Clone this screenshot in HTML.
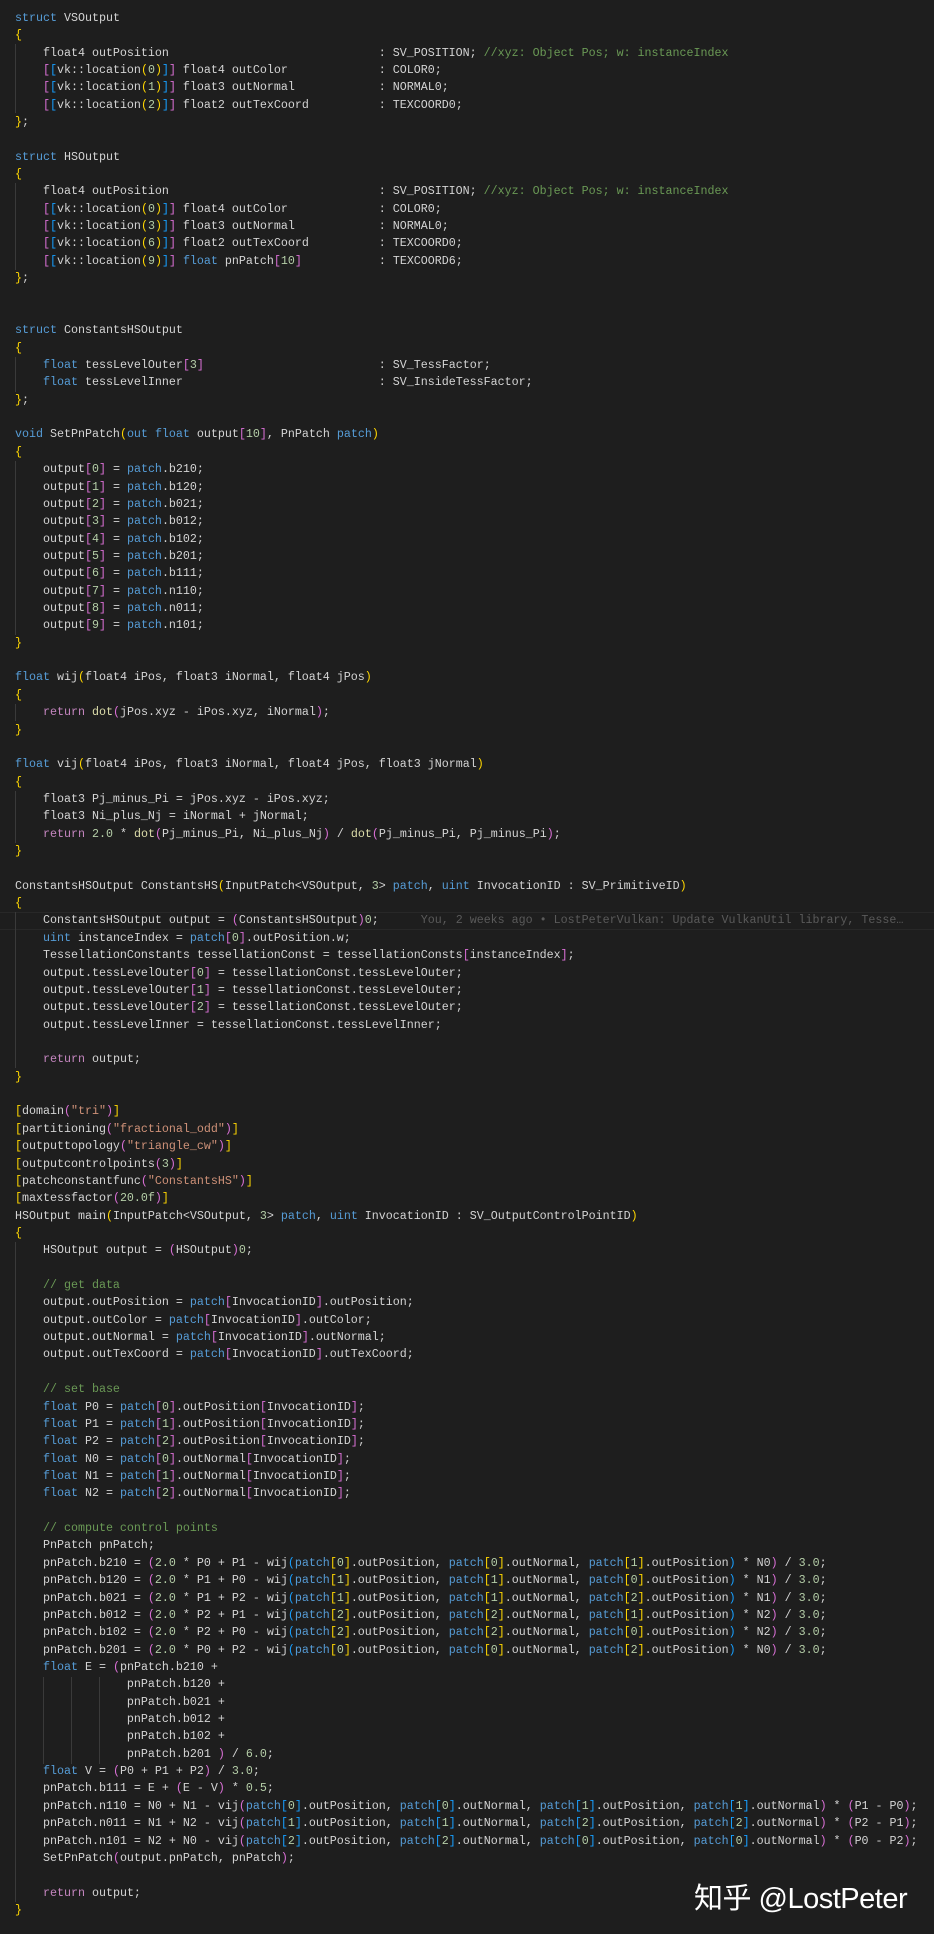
<!DOCTYPE html>
<html><head><meta charset="utf-8">
<style>
html,body{margin:0;padding:0;background:#1e1e1e;}
body{width:934px;height:1934px;position:relative;overflow:hidden;}
pre{margin:0;position:absolute;left:15px;top:9.8px;font-family:"Liberation Mono",monospace;font-size:11.67px;line-height:17.36px;color:#d4d4d4;white-space:pre;}
.k{color:#569cd6}.c{color:#6a9955}.s{color:#ce9178}.n{color:#b5cea8}.r{color:#c586c0}.f{color:#dcdcaa}
.y{color:#ffd700}.p{color:#da70d6}.b{color:#179fff}
.bl{color:#5a5a5a}
.g{position:absolute;width:1px;background:#3a3a3a;}
.wm{position:absolute;left:694px;top:1875px;font-family:"Liberation Sans","Noto Sans CJK SC",sans-serif;font-size:29px;color:#fff;letter-spacing:-0.5px;}
.cur{position:absolute;left:0;width:934px;height:18px;border-top:1px solid #282828;border-bottom:1px solid #282828;box-sizing:border-box;}
</style></head><body>
<div class="cur" style="top:912px"></div>
<div class="g" style="left:15px;top:44px;height:69px"></div>
<div class="g" style="left:15px;top:183px;height:87px"></div>
<div class="g" style="left:15px;top:357px;height:35px"></div>
<div class="g" style="left:15px;top:461px;height:174px"></div>
<div class="g" style="left:15px;top:704px;height:17px"></div>
<div class="g" style="left:15px;top:791px;height:52px"></div>
<div class="g" style="left:15px;top:912px;height:156px"></div>
<div class="g" style="left:15px;top:1242px;height:660px"></div>
<div class="g" style="left:43px;top:1677px;height:87px"></div>
<div class="g" style="left:71px;top:1677px;height:87px"></div>
<div class="g" style="left:99px;top:1677px;height:87px"></div>
<pre><span class="k">struct</span> VSOutput
<span class="y">{</span>
    float4 outPosition                              : SV_POSITION; <span class="c">//xyz: Object Pos; w: instanceIndex</span>
    <span class="p">[</span><span class="b">[</span>vk::location<span class="y">(</span><span class="n">0</span><span class="y">)</span><span class="b">]</span><span class="p">]</span> float4 outColor             : COLOR0;
    <span class="p">[</span><span class="b">[</span>vk::location<span class="y">(</span><span class="n">1</span><span class="y">)</span><span class="b">]</span><span class="p">]</span> float3 outNormal            : NORMAL0;
    <span class="p">[</span><span class="b">[</span>vk::location<span class="y">(</span><span class="n">2</span><span class="y">)</span><span class="b">]</span><span class="p">]</span> float2 outTexCoord          : TEXCOORD0;
<span class="y">}</span>;

<span class="k">struct</span> HSOutput
<span class="y">{</span>
    float4 outPosition                              : SV_POSITION; <span class="c">//xyz: Object Pos; w: instanceIndex</span>
    <span class="p">[</span><span class="b">[</span>vk::location<span class="y">(</span><span class="n">0</span><span class="y">)</span><span class="b">]</span><span class="p">]</span> float4 outColor             : COLOR0;
    <span class="p">[</span><span class="b">[</span>vk::location<span class="y">(</span><span class="n">3</span><span class="y">)</span><span class="b">]</span><span class="p">]</span> float3 outNormal            : NORMAL0;
    <span class="p">[</span><span class="b">[</span>vk::location<span class="y">(</span><span class="n">6</span><span class="y">)</span><span class="b">]</span><span class="p">]</span> float2 outTexCoord          : TEXCOORD0;
    <span class="p">[</span><span class="b">[</span>vk::location<span class="y">(</span><span class="n">9</span><span class="y">)</span><span class="b">]</span><span class="p">]</span> <span class="k">float</span> pnPatch<span class="p">[</span><span class="n">10</span><span class="p">]</span>           : TEXCOORD6;
<span class="y">}</span>;


<span class="k">struct</span> ConstantsHSOutput
<span class="y">{</span>
    <span class="k">float</span> tessLevelOuter<span class="p">[</span><span class="n">3</span><span class="p">]</span>                         : SV_TessFactor;
    <span class="k">float</span> tessLevelInner                            : SV_InsideTessFactor;
<span class="y">}</span>;

<span class="k">void</span> SetPnPatch<span class="y">(</span><span class="k">out</span> <span class="k">float</span> output<span class="p">[</span><span class="n">10</span><span class="p">]</span>, PnPatch <span class="k">patch</span><span class="y">)</span>
<span class="y">{</span>
    output<span class="p">[</span><span class="n">0</span><span class="p">]</span> = <span class="k">patch</span>.b210;
    output<span class="p">[</span><span class="n">1</span><span class="p">]</span> = <span class="k">patch</span>.b120;
    output<span class="p">[</span><span class="n">2</span><span class="p">]</span> = <span class="k">patch</span>.b021;
    output<span class="p">[</span><span class="n">3</span><span class="p">]</span> = <span class="k">patch</span>.b012;
    output<span class="p">[</span><span class="n">4</span><span class="p">]</span> = <span class="k">patch</span>.b102;
    output<span class="p">[</span><span class="n">5</span><span class="p">]</span> = <span class="k">patch</span>.b201;
    output<span class="p">[</span><span class="n">6</span><span class="p">]</span> = <span class="k">patch</span>.b111;
    output<span class="p">[</span><span class="n">7</span><span class="p">]</span> = <span class="k">patch</span>.n110;
    output<span class="p">[</span><span class="n">8</span><span class="p">]</span> = <span class="k">patch</span>.n011;
    output<span class="p">[</span><span class="n">9</span><span class="p">]</span> = <span class="k">patch</span>.n101;
<span class="y">}</span>

<span class="k">float</span> wij<span class="y">(</span>float4 iPos, float3 iNormal, float4 jPos<span class="y">)</span>
<span class="y">{</span>
    <span class="r">return</span> <span class="f">dot</span><span class="p">(</span>jPos.xyz - iPos.xyz, iNormal<span class="p">)</span>;
<span class="y">}</span>

<span class="k">float</span> vij<span class="y">(</span>float4 iPos, float3 iNormal, float4 jPos, float3 jNormal<span class="y">)</span>
<span class="y">{</span>
    float3 Pj_minus_Pi = jPos.xyz - iPos.xyz;
    float3 Ni_plus_Nj = iNormal + jNormal;
    <span class="r">return</span> <span class="n">2.0</span> * <span class="f">dot</span><span class="p">(</span>Pj_minus_Pi, Ni_plus_Nj<span class="p">)</span> / <span class="f">dot</span><span class="p">(</span>Pj_minus_Pi, Pj_minus_Pi<span class="p">)</span>;
<span class="y">}</span>

ConstantsHSOutput ConstantsHS<span class="y">(</span>InputPatch&lt;VSOutput, <span class="n">3</span>&gt; <span class="k">patch</span>, <span class="k">uint</span> InvocationID : SV_PrimitiveID<span class="y">)</span>
<span class="y">{</span>
    ConstantsHSOutput output = <span class="p">(</span>ConstantsHSOutput<span class="p">)</span><span class="n">0</span>;      <span class="bl">You, 2 weeks ago • LostPeterVulkan: Update VulkanUtil library, Tesse…</span>
    <span class="k">uint</span> instanceIndex = <span class="k">patch</span><span class="p">[</span><span class="n">0</span><span class="p">]</span>.outPosition.w;
    TessellationConstants tessellationConst = tessellationConsts<span class="p">[</span>instanceIndex<span class="p">]</span>;
    output.tessLevelOuter<span class="p">[</span><span class="n">0</span><span class="p">]</span> = tessellationConst.tessLevelOuter;
    output.tessLevelOuter<span class="p">[</span><span class="n">1</span><span class="p">]</span> = tessellationConst.tessLevelOuter;
    output.tessLevelOuter<span class="p">[</span><span class="n">2</span><span class="p">]</span> = tessellationConst.tessLevelOuter;
    output.tessLevelInner = tessellationConst.tessLevelInner;

    <span class="r">return</span> output;
<span class="y">}</span>

<span class="y">[</span>domain<span class="p">(</span><span class="s">"tri"</span><span class="p">)</span><span class="y">]</span>
<span class="y">[</span>partitioning<span class="p">(</span><span class="s">"fractional_odd"</span><span class="p">)</span><span class="y">]</span>
<span class="y">[</span>outputtopology<span class="p">(</span><span class="s">"triangle_cw"</span><span class="p">)</span><span class="y">]</span>
<span class="y">[</span>outputcontrolpoints<span class="p">(</span><span class="n">3</span><span class="p">)</span><span class="y">]</span>
<span class="y">[</span>patchconstantfunc<span class="p">(</span><span class="s">"ConstantsHS"</span><span class="p">)</span><span class="y">]</span>
<span class="y">[</span>maxtessfactor<span class="p">(</span><span class="n">20.0f</span><span class="p">)</span><span class="y">]</span>
HSOutput main<span class="y">(</span>InputPatch&lt;VSOutput, <span class="n">3</span>&gt; <span class="k">patch</span>, <span class="k">uint</span> InvocationID : SV_OutputControlPointID<span class="y">)</span>
<span class="y">{</span>
    HSOutput output = <span class="p">(</span>HSOutput<span class="p">)</span><span class="n">0</span>;

    <span class="c">// get data</span>
    output.outPosition = <span class="k">patch</span><span class="p">[</span>InvocationID<span class="p">]</span>.outPosition;
    output.outColor = <span class="k">patch</span><span class="p">[</span>InvocationID<span class="p">]</span>.outColor;
    output.outNormal = <span class="k">patch</span><span class="p">[</span>InvocationID<span class="p">]</span>.outNormal;
    output.outTexCoord = <span class="k">patch</span><span class="p">[</span>InvocationID<span class="p">]</span>.outTexCoord;

    <span class="c">// set base</span>
    <span class="k">float</span> P0 = <span class="k">patch</span><span class="p">[</span><span class="n">0</span><span class="p">]</span>.outPosition<span class="p">[</span>InvocationID<span class="p">]</span>;
    <span class="k">float</span> P1 = <span class="k">patch</span><span class="p">[</span><span class="n">1</span><span class="p">]</span>.outPosition<span class="p">[</span>InvocationID<span class="p">]</span>;
    <span class="k">float</span> P2 = <span class="k">patch</span><span class="p">[</span><span class="n">2</span><span class="p">]</span>.outPosition<span class="p">[</span>InvocationID<span class="p">]</span>;
    <span class="k">float</span> N0 = <span class="k">patch</span><span class="p">[</span><span class="n">0</span><span class="p">]</span>.outNormal<span class="p">[</span>InvocationID<span class="p">]</span>;
    <span class="k">float</span> N1 = <span class="k">patch</span><span class="p">[</span><span class="n">1</span><span class="p">]</span>.outNormal<span class="p">[</span>InvocationID<span class="p">]</span>;
    <span class="k">float</span> N2 = <span class="k">patch</span><span class="p">[</span><span class="n">2</span><span class="p">]</span>.outNormal<span class="p">[</span>InvocationID<span class="p">]</span>;

    <span class="c">// compute control points</span>
    PnPatch pnPatch;
    pnPatch.b210 = <span class="p">(</span><span class="n">2.0</span> * P0 + P1 - wij<span class="b">(</span><span class="k">patch</span><span class="y">[</span><span class="n">0</span><span class="y">]</span>.outPosition, <span class="k">patch</span><span class="y">[</span><span class="n">0</span><span class="y">]</span>.outNormal, <span class="k">patch</span><span class="y">[</span><span class="n">1</span><span class="y">]</span>.outPosition<span class="b">)</span> * N0<span class="p">)</span> / <span class="n">3.0</span>;
    pnPatch.b120 = <span class="p">(</span><span class="n">2.0</span> * P1 + P0 - wij<span class="b">(</span><span class="k">patch</span><span class="y">[</span><span class="n">1</span><span class="y">]</span>.outPosition, <span class="k">patch</span><span class="y">[</span><span class="n">1</span><span class="y">]</span>.outNormal, <span class="k">patch</span><span class="y">[</span><span class="n">0</span><span class="y">]</span>.outPosition<span class="b">)</span> * N1<span class="p">)</span> / <span class="n">3.0</span>;
    pnPatch.b021 = <span class="p">(</span><span class="n">2.0</span> * P1 + P2 - wij<span class="b">(</span><span class="k">patch</span><span class="y">[</span><span class="n">1</span><span class="y">]</span>.outPosition, <span class="k">patch</span><span class="y">[</span><span class="n">1</span><span class="y">]</span>.outNormal, <span class="k">patch</span><span class="y">[</span><span class="n">2</span><span class="y">]</span>.outPosition<span class="b">)</span> * N1<span class="p">)</span> / <span class="n">3.0</span>;
    pnPatch.b012 = <span class="p">(</span><span class="n">2.0</span> * P2 + P1 - wij<span class="b">(</span><span class="k">patch</span><span class="y">[</span><span class="n">2</span><span class="y">]</span>.outPosition, <span class="k">patch</span><span class="y">[</span><span class="n">2</span><span class="y">]</span>.outNormal, <span class="k">patch</span><span class="y">[</span><span class="n">1</span><span class="y">]</span>.outPosition<span class="b">)</span> * N2<span class="p">)</span> / <span class="n">3.0</span>;
    pnPatch.b102 = <span class="p">(</span><span class="n">2.0</span> * P2 + P0 - wij<span class="b">(</span><span class="k">patch</span><span class="y">[</span><span class="n">2</span><span class="y">]</span>.outPosition, <span class="k">patch</span><span class="y">[</span><span class="n">2</span><span class="y">]</span>.outNormal, <span class="k">patch</span><span class="y">[</span><span class="n">0</span><span class="y">]</span>.outPosition<span class="b">)</span> * N2<span class="p">)</span> / <span class="n">3.0</span>;
    pnPatch.b201 = <span class="p">(</span><span class="n">2.0</span> * P0 + P2 - wij<span class="b">(</span><span class="k">patch</span><span class="y">[</span><span class="n">0</span><span class="y">]</span>.outPosition, <span class="k">patch</span><span class="y">[</span><span class="n">0</span><span class="y">]</span>.outNormal, <span class="k">patch</span><span class="y">[</span><span class="n">2</span><span class="y">]</span>.outPosition<span class="b">)</span> * N0<span class="p">)</span> / <span class="n">3.0</span>;
    <span class="k">float</span> E = <span class="p">(</span>pnPatch.b210 +
                pnPatch.b120 +
                pnPatch.b021 +
                pnPatch.b012 +
                pnPatch.b102 +
                pnPatch.b201 <span class="p">)</span> / <span class="n">6.0</span>;
    <span class="k">float</span> V = <span class="p">(</span>P0 + P1 + P2<span class="p">)</span> / <span class="n">3.0</span>;
    pnPatch.b111 = E + <span class="p">(</span>E - V<span class="p">)</span> * <span class="n">0.5</span>;
    pnPatch.n110 = N0 + N1 - vij<span class="p">(</span><span class="k">patch</span><span class="b">[</span><span class="n">0</span><span class="b">]</span>.outPosition, <span class="k">patch</span><span class="b">[</span><span class="n">0</span><span class="b">]</span>.outNormal, <span class="k">patch</span><span class="b">[</span><span class="n">1</span><span class="b">]</span>.outPosition, <span class="k">patch</span><span class="b">[</span><span class="n">1</span><span class="b">]</span>.outNormal<span class="p">)</span> * <span class="p">(</span>P1 - P0<span class="p">)</span>;
    pnPatch.n011 = N1 + N2 - vij<span class="p">(</span><span class="k">patch</span><span class="b">[</span><span class="n">1</span><span class="b">]</span>.outPosition, <span class="k">patch</span><span class="b">[</span><span class="n">1</span><span class="b">]</span>.outNormal, <span class="k">patch</span><span class="b">[</span><span class="n">2</span><span class="b">]</span>.outPosition, <span class="k">patch</span><span class="b">[</span><span class="n">2</span><span class="b">]</span>.outNormal<span class="p">)</span> * <span class="p">(</span>P2 - P1<span class="p">)</span>;
    pnPatch.n101 = N2 + N0 - vij<span class="p">(</span><span class="k">patch</span><span class="b">[</span><span class="n">2</span><span class="b">]</span>.outPosition, <span class="k">patch</span><span class="b">[</span><span class="n">2</span><span class="b">]</span>.outNormal, <span class="k">patch</span><span class="b">[</span><span class="n">0</span><span class="b">]</span>.outPosition, <span class="k">patch</span><span class="b">[</span><span class="n">0</span><span class="b">]</span>.outNormal<span class="p">)</span> * <span class="p">(</span>P0 - P2<span class="p">)</span>;
    SetPnPatch<span class="p">(</span>output.pnPatch, pnPatch<span class="p">)</span>;

    <span class="r">return</span> output;
<span class="y">}</span></pre>
<div class="wm">知乎 @LostPeter</div>
</body></html>
